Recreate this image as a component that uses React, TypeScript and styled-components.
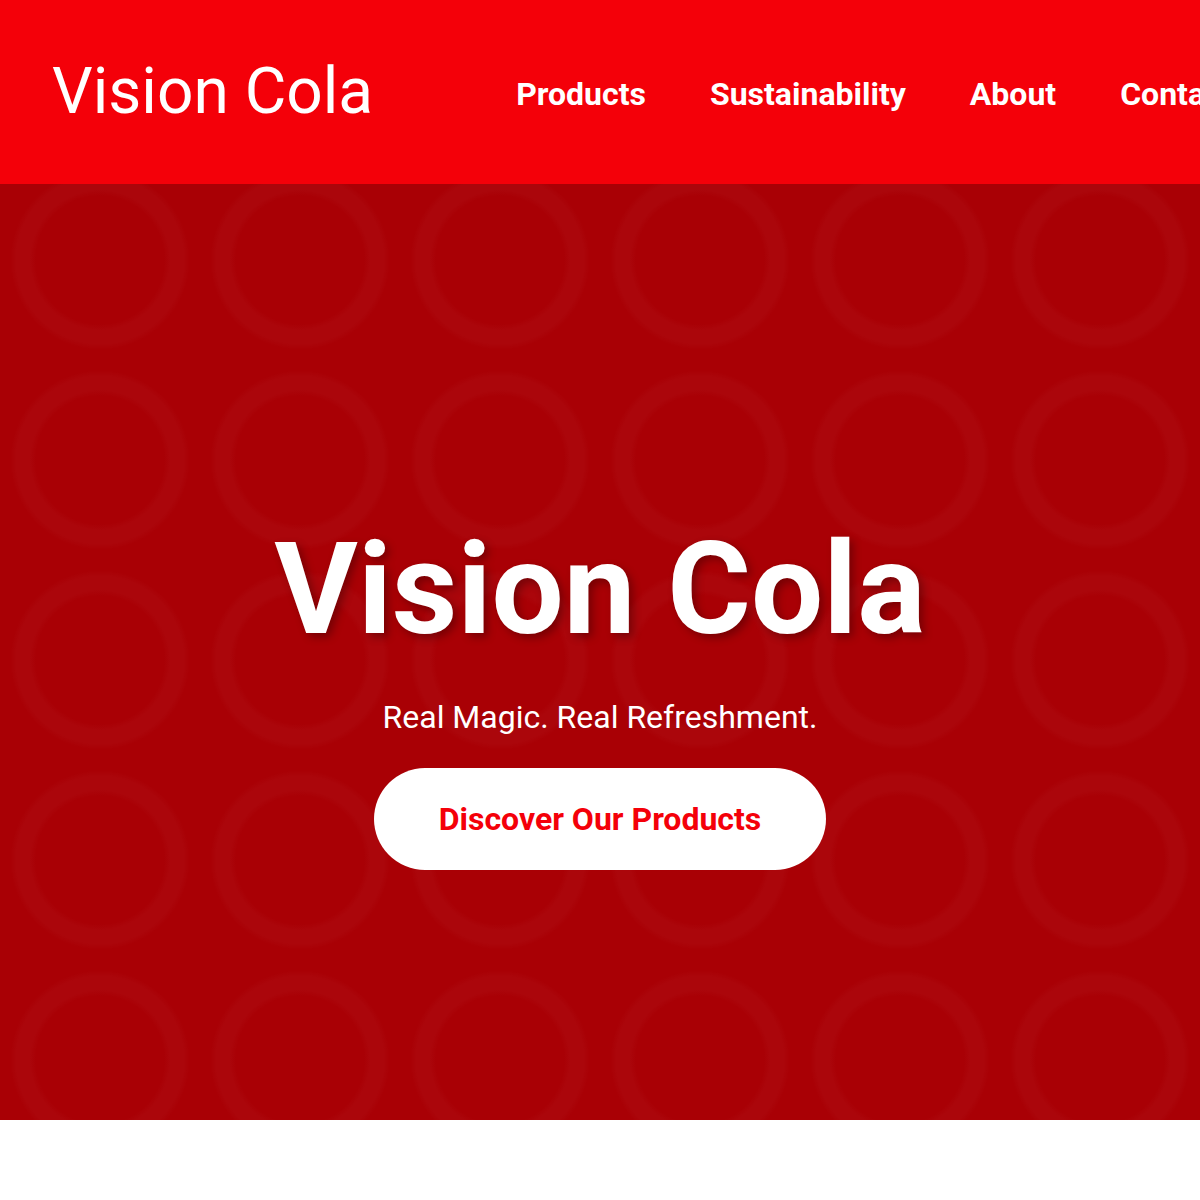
import React from "react";
import styled, { createGlobalStyle } from "styled-components";

const palette = {
  red: "#F40009",
  deepRed: "#A90005",
  white: "#FFFFFF",
};

const GlobalStyle = createGlobalStyle`
  html, body {
    margin: 0;
    padding: 0;
    background: ${palette.white};
    font-family: Roboto, "Liberation Sans", Arial, sans-serif;
    overflow-x: hidden;
  }
  * {
    box-sizing: border-box;
  }
`;

const Header = styled.header`
  height: 184px;
  background-color: ${palette.red};
  display: flex;
  align-items: center;
  padding: 0 52px;
  overflow: hidden;
  white-space: nowrap;
`;

const Logo = styled.h1`
  margin: 0 143px 0 0;
  font-size: 64px;
  font-weight: 400;
  line-height: 1.2;
  color: ${palette.white};
  flex-shrink: 0;
`;

const Nav = styled.nav`
  display: flex;
  gap: 64px;
  flex-shrink: 0;
  padding-top: 3px;
`;

const NavLink = styled.a`
  color: ${palette.white};
  font-size: 32px;
  font-weight: 700;
  text-decoration: none;
`;

const Hero = styled.section`
  min-height: 936px;
  background-color: ${palette.deepRed};
  /* faint rings pattern */
  background-image: radial-gradient(
    circle at 100px 100px,
    transparent 0,
    transparent 64px,
    rgba(255, 255, 255, 0.025) 70px,
    rgba(255, 255, 255, 0.025) 84px,
    transparent 90px
  );
  background-size: 200px 200px;
  background-position: 0 -24px;
  display: flex;
  flex-direction: column;
  align-items: center;
  justify-content: center;
  padding-top: 79px;
  color: ${palette.white};
  text-align: center;
`;

const Title = styled.h2`
  margin: 0 0 26px;
  font-size: 128px;
  font-weight: 700;
  line-height: 1.2;
  text-shadow: 4px 4px 8px rgba(0, 0, 0, 0.3);
`;

const Tagline = styled.p`
  margin: 0 0 27px;
  font-size: 32px;
  font-weight: 400;
  line-height: 1.5;
`;

const CtaButton = styled.button`
  width: 452px;
  height: 102px;
  border: none;
  border-radius: 51px;
  background-color: ${palette.white};
  color: ${palette.red};
  font-family: inherit;
  font-size: 32px;
  font-weight: 700;
  cursor: pointer;
`;

const navItems = ["Products", "Sustainability", "About", "Contact"];

const App: React.FC = () => {
  return (
    <>
      <GlobalStyle />
      <Header>
        <Logo>Vision Cola</Logo>
        <Nav>
          {navItems.map((item) => (
            <NavLink key={item} href="#">
              {item}
            </NavLink>
          ))}
        </Nav>
      </Header>
      <Hero>
        <Title>Vision Cola</Title>
        <Tagline>Real Magic. Real Refreshment.</Tagline>
        <CtaButton type="button">Discover Our Products</CtaButton>
      </Hero>
    </>
  );
};

export default App;
